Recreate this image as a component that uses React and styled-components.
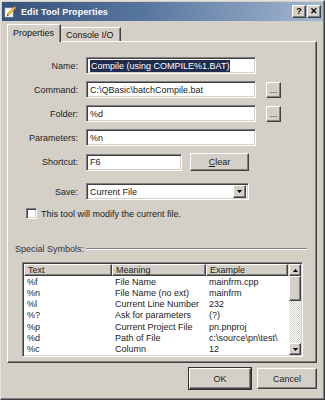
import React from 'react';
import styled, { createGlobalStyle, css } from 'styled-components';

const GlobalStyle = createGlobalStyle`
  html, body {
    margin: 0;
    padding: 0;
    background: #d4d0c8;
  }
  body {
    font-family: "Liberation Sans", Arial, sans-serif;
    font-size: 9px;
    color: #111;
  }
`;

const raised = css`
  border: 1px solid;
  border-color: #fff #404040 #404040 #fff;
  box-shadow: inset -1px -1px #808080;
  background: #d4d0c8;
`;

const sunken = css`
  border: 1px solid;
  border-color: #808080 #fff #fff #808080;
  box-shadow: inset 1px 1px #404040, inset -1px -1px #d4d0c8;
`;

const Window = styled.div`
  width: 325px;
  height: 400px;
  box-sizing: border-box;
  background: #d4d0c8;
  border: 1px solid;
  border-color: #e4e1dc #404040 #404040 #e4e1dc;
  box-shadow: inset -1px -1px #808080;
  padding: 1px;
  display: flex;
  flex-direction: column;
`;

const TitleBar = styled.div`
  height: 19px;
  flex-shrink: 0;
  display: flex;
  align-items: center;
  padding: 0 2px 0 2px;
  gap: 4px;
  background: linear-gradient(90deg, #36537a 0%, #5877a0 45%, #a3b7d0 100%);
  color: #fff;
`;

const Title = styled.span`
  font-weight: bold;
  font-size: 9px;
  letter-spacing: 0.1px;
`;

const CaptionButtons = styled.div`
  margin-left: auto;
  display: flex;
  gap: 1px;
`;

const CaptionButton = styled.div`
  ${raised};
  width: 12px;
  height: 11px;
  display: flex;
  align-items: center;
  justify-content: center;
  color: #000;
  font-weight: bold;
  font-size: 9px;
  line-height: 1;
`;

const Body = styled.div`
  flex: 1;
  display: flex;
  flex-direction: column;
  padding: 4px 6px 0 5px;
`;

const TabStrip = styled.div`
  display: flex;
  align-items: flex-end;
  height: 16px;
  position: relative;
  z-index: 1;
`;

const Tab = styled.div`
  border: 1px solid;
  border-color: #fff #404040 transparent #fff;
  border-bottom: none;
  box-shadow: inset -1px 0 #808080;
  padding: 0 6px 0 5px;
  display: flex;
  align-items: center;
  background: #d4d0c8;
  height: ${({ active }) => (active ? '16px' : '13px')};
  margin-bottom: ${({ active }) => (active ? '-1px' : '0')};
  padding-bottom: ${({ active }) => (active ? '1px' : '0')};
  ${({ active }) =>
    !active &&
    css`
      border-left: none;
    `};
`;

const Panel = styled.div`
  height: 322px;
  box-sizing: border-box;
  border: 1px solid;
  border-color: #fff #404040 #404040 #fff;
  box-shadow: inset -1px -1px #808080;
  padding: 15px 0 0 0;
  display: flex;
  flex-direction: column;
`;

const Row = styled.div`
  display: flex;
  align-items: center;
  margin-bottom: ${({ gap }) => gap}px;
`;

const Label = styled.div`
  width: 70px;
  margin-right: 8px;
  text-align: right;
  color: #222;
`;

const Input = styled.div`
  ${sunken};
  box-sizing: border-box;
  width: ${({ width }) => width}px;
  height: 17px;
  background: #fff;
  display: flex;
  align-items: center;
  padding-left: 3px;
  color: #222;
  white-space: nowrap;
  overflow: hidden;
`;

const Selected = styled.span`
  background: #1f2c4f;
  color: #fff;
  padding: 1px 1px;
`;

const Button = styled.div`
  ${raised};
  box-sizing: border-box;
  width: ${({ width }) => width}px;
  height: ${({ height }) => height}px;
  margin-left: ${({ offset }) => offset || 0}px;
  display: flex;
  align-items: center;
  justify-content: center;
  color: #222;
  ${({ isDefault }) =>
    isDefault &&
    css`
      outline: 1px solid #303030;
      outline-offset: 0;
    `};
`;

const Select = styled.div`
  ${sunken};
  box-sizing: border-box;
  width: 163px;
  height: 17px;
  background: #fff;
  display: flex;
  align-items: center;
  padding: 0 2px 0 3px;
  color: #222;
`;

const ArrowButton = styled.div`
  ${raised};
  box-sizing: border-box;
  width: 13px;
  height: 13px;
  margin-left: auto;
  display: flex;
  align-items: center;
  justify-content: center;
`;

const CheckRow = styled.label`
  display: flex;
  align-items: center;
  gap: 4px;
  margin-left: 18px;
  color: #222;
`;

const CheckBox = styled.span`
  ${sunken};
  box-sizing: border-box;
  width: 11px;
  height: 11px;
  background: #fff;
`;

const GroupHeader = styled.div`
  display: flex;
  align-items: center;
  margin: 25px 9px 0 7px;
  color: #333;
  gap: 2px;

  &::after {
    content: '';
    flex: 1;
    height: 0;
    border-top: 1px solid #808080;
    border-bottom: 1px solid #fff;
  }
`;

const ListView = styled.div`
  ${sunken};
  margin: 8px 0 0 14px;
  width: 281px;
  height: 95px;
  box-sizing: border-box;
  background: #fff;
  padding: 1px;
  display: flex;
`;

const ListMain = styled.div`
  flex: 1;
  display: flex;
  flex-direction: column;
`;

const Grid = styled.div`
  display: grid;
  grid-template-columns: 88px 94px 82px;
  height: ${({ header }) => (header ? '12px' : '11.5px')};
  align-items: center;
  white-space: nowrap;
  ${({ header }) =>
    header &&
    css`
      background: #d4d0c8;
    `};
`;

const HeaderCell = styled.div`
  ${raised};
  box-sizing: border-box;
  height: 12px;
  padding-left: 3px;
  display: flex;
  align-items: center;
  color: #222;
`;

const Cell = styled.div`
  padding-left: 3px;
  color: #222;
  overflow: hidden;
`;

const ScrollBar = styled.div`
  width: 12px;
  display: flex;
  flex-direction: column;
  background: repeating-conic-gradient(#d4d0c8 0 25%, #fff 0 50%) 0 0 / 2px 2px;
`;

const ScrollButton = styled.div`
  ${raised};
  box-sizing: border-box;
  height: ${({ size }) => size}px;
  display: flex;
  align-items: center;
  justify-content: center;
  margin-top: ${({ bottom }) => (bottom ? 'auto' : '0')};
`;

const Footer = styled.div`
  display: flex;
  justify-content: flex-end;
  gap: 6px;
  margin-top: 5px;
`;

const Pencil = () => (
  <svg width="13" height="13" viewBox="0 0 13 13">
    <rect x="1" y="3" width="8" height="9" fill="#fff" stroke="#b8b8b8" strokeWidth="0.6" />
    <path d="M3 11 L4 8 L10.5 1.5 L12 3 L5.5 9.5 Z" fill="#f3c93a" stroke="#a8781a" strokeWidth="0.6" />
    <path d="M3 11 L3.6 9.2 L4.8 10.4 Z" fill="#5a3a10" />
    <path d="M9.6 2.4 L11.1 3.9" stroke="#e07a30" strokeWidth="1.2" />
  </svg>
);

const Triangle = ({ down }) => (
  <svg width="5" height="3" viewBox="0 0 5 3">
    <path d={down ? 'M0 0 H5 L2.5 3 Z' : 'M0 3 H5 L2.5 0 Z'} fill="#000" />
  </svg>
);

const symbols = [
  ['%f', 'File Name', 'mainfrm.cpp'],
  ['%n', 'File Name (no ext)', 'mainfrm'],
  ['%l', 'Current Line Number', '232'],
  ['%?', 'Ask for parameters', '(?)'],
  ['%p', 'Current Project File', 'pn.pnproj'],
  ['%d', 'Path of File', 'c:\\source\\pn\\test\\'],
  ['%c', 'Column', '12'],
];

const App = () => (
  <>
    <GlobalStyle />
    <Window>
      <TitleBar>
        <Pencil />
        <Title>Edit Tool Properties</Title>
        <CaptionButtons>
          <CaptionButton>?</CaptionButton>
          <CaptionButton>✕</CaptionButton>
        </CaptionButtons>
      </TitleBar>
      <Body>
        <TabStrip>
          <Tab active>Properties</Tab>
          <Tab>Console I/O</Tab>
        </TabStrip>
        <Panel>
          <Row gap={7}>
            <Label>Name:</Label>
            <Input width={170}>
              <Selected>Compile (using COMPILE%1.BAT)</Selected>
            </Input>
          </Row>
          <Row gap={7}>
            <Label>Command:</Label>
            <Input width={170}>C:\QBasic\batchCompile.bat</Input>
            <Button width={15} height={16} offset={10}>...</Button>
          </Row>
          <Row gap={7}>
            <Label>Folder:</Label>
            <Input width={170}>%d</Input>
            <Button width={15} height={16} offset={10}>...</Button>
          </Row>
          <Row gap={7}>
            <Label>Parameters:</Label>
            <Input width={170}>%n</Input>
          </Row>
          <Row gap={12}>
            <Label>Shortcut:</Label>
            <Input width={96}>F6</Input>
            <Button width={59} height={18} offset={8}>
              <span>
                <u>C</u>lear
              </span>
            </Button>
          </Row>
          <Row gap={8}>
            <Label>Save:</Label>
            <Select>
              Current File
              <ArrowButton>
                <Triangle down />
              </ArrowButton>
            </Select>
          </Row>
          <CheckRow>
            <CheckBox />
            This tool will modify the current file.
          </CheckRow>
          <GroupHeader>Special Symbols:</GroupHeader>
          <ListView>
            <ListMain>
              <Grid header>
                <HeaderCell>Text</HeaderCell>
                <HeaderCell>Meaning</HeaderCell>
                <HeaderCell>Example</HeaderCell>
              </Grid>
              {symbols.map(([text, meaning, example]) => (
                <Grid key={text}>
                  <Cell>{text}</Cell>
                  <Cell>{meaning}</Cell>
                  <Cell>{example}</Cell>
                </Grid>
              ))}
            </ListMain>
            <ScrollBar>
              <ScrollButton size={12}>
                <Triangle />
              </ScrollButton>
              <ScrollButton size={25} />
              <ScrollButton size={12} bottom>
                <Triangle down />
              </ScrollButton>
            </ScrollBar>
          </ListView>
        </Panel>
        <Footer>
          <Button width={62} height={21} isDefault>
            OK
          </Button>
          <Button width={60} height={21}>
            Cancel
          </Button>
        </Footer>
      </Body>
    </Window>
  </>
);

export default App;
